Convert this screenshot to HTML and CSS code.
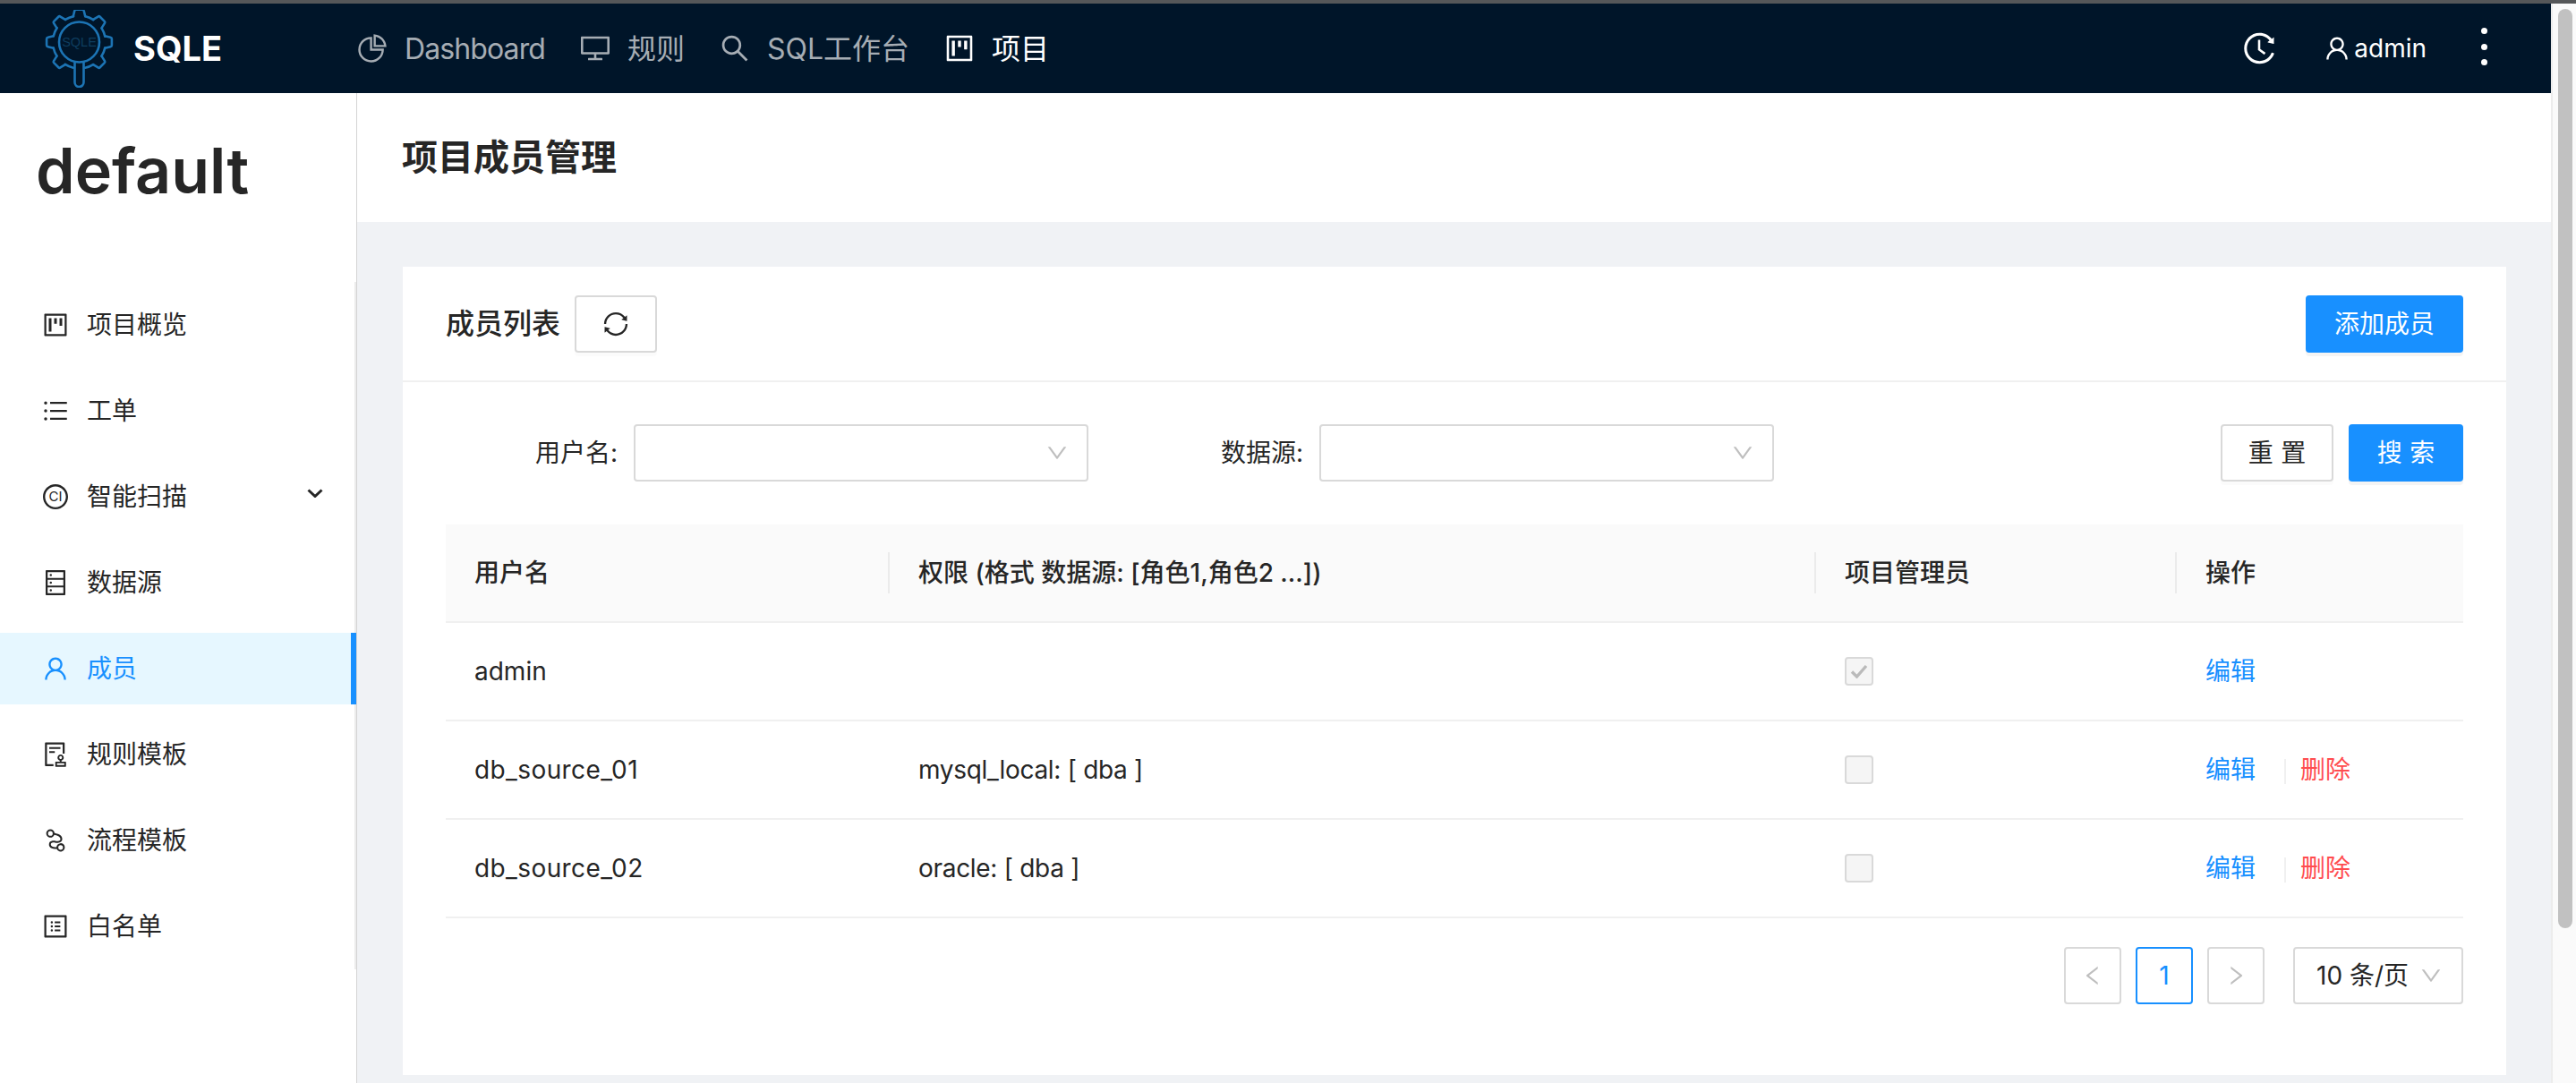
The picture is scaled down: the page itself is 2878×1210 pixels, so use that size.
FILE: index.html
```html
<!DOCTYPE html>
<html lang="zh-CN">
<head>
<meta charset="utf-8">
<title>SQLE</title>
<link rel="stylesheet" href="styles.css">
</head>
<body>
<svg class="sprite" xmlns="http://www.w3.org/2000/svg" aria-hidden="true">
  <symbol id="i-pie" viewBox="64 64 896 896"><path d="M864 518H506V160c0-4.4-3.6-8-8-8h-26a398.46 398.46 0 0 0-282.8 117.1 398.19 398.19 0 0 0-85.7 127.1A397.61 397.61 0 0 0 72 552a398.46 398.46 0 0 0 117.1 282.8c36.7 36.7 79.5 65.6 127.1 85.7A397.61 397.61 0 0 0 472 952a398.46 398.46 0 0 0 282.8-117.1c36.7-36.7 65.6-79.5 85.7-127.1A397.61 397.61 0 0 0 872 552v-26c0-4.4-3.6-8-8-8zM705.7 787.8A331.59 331.59 0 0 1 470.4 884c-88.1-.4-170.9-34.9-233.2-97.2C174.5 724.1 140 640.7 140 552c0-88.7 34.5-172.1 97.2-234.8 54.6-54.6 124.9-87.9 200.8-95.5V586h364.3c-7.7 76.3-41.3 147-96.6 201.8zM952 462.4l-2.6-28.2c-8.5-92.1-49.4-179-115.2-244.6A399.4 399.4 0 0 0 589 74.6L560.7 72c-4.7-.4-8.7 3.2-8.7 7.9V464c0 4.4 3.6 8 8 8l384-1c4.7 0 8.4-4 8-8.6zm-332.2-58.2V147.6a332.24 332.24 0 0 1 166.4 89.8c45.7 45.6 77 103.6 90 166.1l-256.4.7z"/></symbol>
  <symbol id="i-desktop" viewBox="64 64 896 896"><path d="M928 140H96c-17.7 0-32 14.3-32 32v496c0 17.7 14.3 32 32 32h380v112H304c-8.8 0-16 7.2-16 16v48c0 4.4 3.6 8 8 8h432c4.4 0 8-3.6 8-8v-48c0-8.8-7.2-16-16-16H548V700h380c17.7 0 32-14.3 32-32V172c0-17.7-14.3-32-32-32zm-40 488H136V212h752v416z"/></symbol>
  <symbol id="i-search" viewBox="64 64 896 896"><path d="M909.6 854.5L649.9 594.8C690.2 542.7 712 479 712 412c0-80.2-31.3-155.4-87.9-212.1-56.6-56.7-132-87.9-212.1-87.9s-155.5 31.3-212.1 87.9C143.2 256.5 112 331.8 112 412c0 80.1 31.3 155.5 87.9 212.1C256.5 680.8 331.8 712 412 712c67 0 130.6-21.8 182.7-62l259.7 259.6a8.2 8.2 0 0 0 11.6 0l43.6-43.5a8.2 8.2 0 0 0 0-11.6zM570.4 570.4C528 612.7 471.8 636 412 636s-116-23.3-158.4-65.6C211.3 528 188 471.8 188 412s23.3-116.1 65.6-158.4C296 211.3 352.2 188 412 188s116.1 23.2 158.4 65.6S636 352.2 636 412s-23.3 116.1-65.6 158.4z"/></symbol>
  <symbol id="i-project" viewBox="64 64 896 896"><path d="M280 752h80c4.4 0 8-3.6 8-8V280c0-4.4-3.6-8-8-8h-80c-4.4 0-8 3.6-8 8v464c0 4.4 3.6 8 8 8zm192-280h80c4.4 0 8-3.6 8-8V280c0-4.4-3.6-8-8-8h-80c-4.4 0-8 3.6-8 8v184c0 4.4 3.6 8 8 8zm192 72h80c4.4 0 8-3.6 8-8V280c0-4.4-3.6-8-8-8h-80c-4.4 0-8 3.6-8 8v256c0 4.4 3.6 8 8 8zm216-432H144c-17.7 0-32 14.3-32 32v736c0 17.7 14.3 32 32 32h736c17.7 0 32-14.3 32-32V144c0-17.7-14.3-32-32-32zm-40 728H184V184h656v656z"/></symbol>
  <symbol id="i-user" viewBox="64 64 896 896"><path d="M858.5 763.6a374 374 0 0 0-80.6-119.5 375.63 375.63 0 0 0-119.5-80.6c-.4-.2-.8-.3-1.2-.5C719.5 518 760 444.7 760 362c0-137-111-248-248-248S264 225 264 362c0 82.7 40.5 156 102.8 201.1-.4.2-.8.3-1.2.5-44.8 18.9-85 46-119.5 80.6a375.63 375.63 0 0 0-80.6 119.5A371.7 371.7 0 0 0 136 901.8a8 8 0 0 0 8 8.2h60c4.4 0 7.9-3.5 8-7.8 2-77.2 33-149.5 87.8-204.3 56.7-56.7 132-87.9 212.2-87.9s155.5 31.2 212.2 87.9C779 752.7 810 825 812 902.2c.1 4.4 3.6 7.8 8 7.8h60a8 8 0 0 0 8-8.2c-1-47.8-10.9-94.3-29.5-138.2zM512 534c-45.9 0-89.1-17.9-121.6-50.4S340 407.9 340 362c0-45.9 17.9-89.1 50.4-121.6S466.1 190 512 190s89.1 17.9 121.6 50.4S684 316.1 684 362c0 45.9-17.9 89.1-50.4 121.6S557.9 534 512 534z"/></symbol>
  <symbol id="i-history" viewBox="64 64 896 896"><path d="M536.1 273H488c-4.4 0-8 3.6-8 8v275.3c0 2.6 1.2 5 3.3 6.5l165.3 120.7c3.6 2.6 8.6 1.9 11.2-1.7l28.6-39c2.7-3.7 1.9-8.7-1.7-11.2L544.1 528.5V281c0-4.4-3.6-8-8-8zm219.8 75.2l156.8 38.3c5 1.2 9.9-2.6 9.9-7.7l.8-161.5c0-6.7-7.7-10.5-12.9-6.3L752.9 334.1a8 8 0 0 0 3 14.1zm167.7 301.1l-56.7-19.5a8 8 0 0 0-10.1 4.8c-1.9 5.1-3.9 10.1-6 15.1-17.8 42.1-43.3 80-75.9 112.5a353 353 0 0 1-112.5 75.9 352.18 352.18 0 0 1-137.7 27.8c-47.8 0-94.1-9.3-137.7-27.8a353 353 0 0 1-112.5-75.9c-32.5-32.5-58-70.4-75.9-112.5A353.44 353.44 0 0 1 171 512c0-47.8 9.3-94.2 27.8-137.8 17.8-42.1 43.3-80 75.9-112.5a353 353 0 0 1 112.5-75.9C430.6 167.3 477 158 524.8 158s94.1 9.3 137.7 27.8A353 353 0 0 1 775 261.7c10.2 10.3 19.8 21 28.6 32.3l59.8-46.8C784.7 146.6 662.2 81.9 524.6 82 285 82.1 92.6 276.7 95 516.4 97.4 751.9 288.9 942 524.8 942c185.5 0 343.5-117.6 403.7-282.3 1.5-4.2-.7-8.9-4.9-10.4z"/></symbol>
  <symbol id="i-sync" viewBox="64 64 896 896"><path d="M168 504.2c1-43.7 10-86.1 26.9-126 17.3-41 42.1-77.7 73.7-109.4S337 212.3 378 195c42.4-17.9 87.4-27 133.9-27s91.5 9.1 133.8 27A341.5 341.5 0 0 1 755 268.8c9.9 9.9 19.2 20.4 27.8 31.4l-60.2 47a8 8 0 0 0 3 14.1l175.7 43c5 1.2 9.9-2.6 9.9-7.7l.8-180.9c0-6.7-7.7-10.5-12.9-6.3l-56.4 44.1C765.8 155.1 646.2 92 511.8 92 282.7 92 96.3 275.6 92 503.8a8 8 0 0 0 8 8.2h60c4.4 0 7.9-3.5 8-7.8zm756 7.8h-60c-4.4 0-7.9 3.5-8 7.8-1 43.7-10 86.1-26.9 126-17.3 41-42.1 77.8-73.7 109.4A342.45 342.45 0 0 1 512.1 856a342.24 342.24 0 0 1-243.2-100.8c-9.9-9.9-19.2-20.4-27.8-31.4l60.2-47a8 8 0 0 0-3-14.1l-175.7-43c-5-1.2-9.9 2.6-9.9 7.7l-.7 181c0 6.7 7.7 10.5 12.9 6.3l56.4-44.1C258.2 868.9 377.8 932 512.2 932c229.2 0 415.5-183.7 419.8-411.8a8 8 0 0 0-8-8.2z"/></symbol>
  <symbol id="i-list" viewBox="64 64 896 896"><path d="M912 192H328c-4.4 0-8 3.6-8 8v56c0 4.4 3.6 8 8 8h584c4.4 0 8-3.6 8-8v-56c0-4.4-3.6-8-8-8zm0 284H328c-4.4 0-8 3.6-8 8v56c0 4.4 3.6 8 8 8h584c4.4 0 8-3.6 8-8v-56c0-4.4-3.6-8-8-8zm0 284H328c-4.4 0-8 3.6-8 8v56c0 4.4 3.6 8 8 8h584c4.4 0 8-3.6 8-8v-56c0-4.4-3.6-8-8-8zM104 228a56 56 0 1 0 112 0 56 56 0 1 0-112 0zm0 284a56 56 0 1 0 112 0 56 56 0 1 0-112 0zm0 284a56 56 0 1 0 112 0 56 56 0 1 0-112 0z"/></symbol>
  <symbol id="i-db" viewBox="64 64 896 896"><path d="M832 64H192c-17.7 0-32 14.3-32 32v832c0 17.7 14.3 32 32 32h640c17.7 0 32-14.3 32-32V96c0-17.7-14.3-32-32-32zm-600 72h560v208H232V136zm560 480H232V408h560v208zm0 272H232V680h560v208zM304 240a40 40 0 1 0 80 0 40 40 0 1 0-80 0zm0 272a40 40 0 1 0 80 0 40 40 0 1 0-80 0zm0 272a40 40 0 1 0 80 0 40 40 0 1 0-80 0z"/></symbol>
  <symbol id="i-audit" viewBox="64 64 896 896"><path d="M296 250c-4.4 0-8 3.6-8 8v48c0 4.4 3.6 8 8 8h384c4.4 0 8-3.6 8-8v-48c0-4.4-3.6-8-8-8H296zm184 144H296c-4.4 0-8 3.6-8 8v48c0 4.4 3.6 8 8 8h184c4.4 0 8-3.6 8-8v-48c0-4.4-3.6-8-8-8zm-48 458H208V148h560v320c0 4.4 3.6 8 8 8h56c4.4 0 8-3.6 8-8V108c0-17.7-14.3-32-32-32H168c-17.7 0-32 14.3-32 32v784c0 17.7 14.3 32 32 32h264c4.4 0 8-3.6 8-8v-56c0-4.4-3.6-8-8-8zm440-88H728v-36.6c46.3-13.8 80-56.6 80-107.4 0-61.9-50.1-112-112-112s-112 50.1-112 112c0 50.7 33.7 93.6 80 107.4V764H520c-8.8 0-16 7.2-16 16v152c0 8.8 7.2 16 16 16h352c8.8 0 16-7.2 16-16V780c0-8.8-7.2-16-16-16zM646 620c0-27.6 22.4-50 50-50s50 22.4 50 50-22.4 50-50 50-50-22.4-50-50zm180 266H566v-60h260v60z"/></symbol>
  <symbol id="i-node" viewBox="64 64 896 896"><path d="M843.5 737.4c-12.4-75.2-79.2-129.1-155.3-125.4S550.9 676 546 752c-153.5-4.8-208-40.7-199.1-113.7 3.3-27.3 19.8-41.9 50.1-49 18.4-4.3 38.8-4.9 57.3-3.2 1.7.2 3.5.3 5.2.5 11.3 2.7 22.8 5 34.3 6.8 34.1 5.6 68.8 8.4 101.8 6.6 92.8-5 156-45.9 159.2-132.7 3.1-84.1-54.7-143.7-147.9-183.6-29.9-12.8-61.6-22.7-93.3-30.2-14.3-3.4-26.3-5.7-35.2-7.2-7.9-75.9-71.5-133.8-147.8-134.4-76.3-.6-140.9 56.1-150.1 131.9s40 146.3 114.2 163.9c74.2 17.6 149.9-23.3 175.7-95.1 9.4 1.7 18.7 3.6 28 5.8 28.2 6.6 56.4 15.4 82.4 26.6 70.7 30.2 109.3 70.1 107.5 119.9-1.6 44.6-33.6 65.2-96.2 68.6-27.5 1.5-57.6-.9-87.3-5.8-8.3-1.4-15.9-2.8-22.6-4.3-3.9-.8-6.6-1.5-7.8-1.8l-3.1-.6c-2.2-.3-5.9-.8-10.7-1.3-25-2.3-52.1-1.5-78.5 4.6-55.2 12.9-93.9 47.2-101.1 105.8-15.7 126.2 78.6 184.7 276 188.9 29.1 70.4 106.4 107.9 179.6 87 73.3-20.9 119.3-93.4 106.9-168.6zM329.1 345.2a83.3 83.3 0 1 1 .01-166.61 83.3 83.3 0 0 1-.01 166.61zM695.6 845a83.3 83.3 0 1 1 .01-166.61A83.3 83.3 0 0 1 695.6 845z"/></symbol>
  <symbol id="i-profile" viewBox="64 64 896 896"><path d="M880 112H144c-17.7 0-32 14.3-32 32v736c0 17.7 14.3 32 32 32h736c17.7 0 32-14.3 32-32V144c0-17.7-14.3-32-32-32zm-40 728H184V184h656v656zM492 400h184c4.4 0 8-3.6 8-8v-48c0-4.4-3.6-8-8-8H492c-4.4 0-8 3.6-8 8v48c0 4.4 3.6 8 8 8zm0 144h184c4.4 0 8-3.6 8-8v-48c0-4.4-3.6-8-8-8H492c-4.4 0-8 3.6-8 8v48c0 4.4 3.6 8 8 8zm0 144h184c4.4 0 8-3.6 8-8v-48c0-4.4-3.6-8-8-8H492c-4.4 0-8 3.6-8 8v48c0 4.4 3.6 8 8 8zM340 368a40 40 0 1 0 80 0 40 40 0 1 0-80 0zm0 144a40 40 0 1 0 80 0 40 40 0 1 0-80 0zm0 144a40 40 0 1 0 80 0 40 40 0 1 0-80 0z"/></symbol>
  <symbol id="i-down" viewBox="64 64 896 896"><path d="M884 256h-75c-5.1 0-9.9 2.5-12.9 6.6L512 654.2 227.9 262.6c-3-4.1-7.8-6.6-12.9-6.6h-75c-6.5 0-10.3 7.4-6.5 12.7l352.6 486.1c12.8 17.6 39 17.6 51.7 0l352.6-486.1c3.9-5.3.1-12.7-6.4-12.7z"/></symbol>
  <symbol id="i-left" viewBox="64 64 896 896"><path d="M724 218.3V141c0-6.7-7.7-10.4-12.9-6.3L260.3 486.8a31.86 31.86 0 0 0 0 50.3l450.8 352.1c5.3 4.1 12.9.4 12.9-6.3v-77.3c0-4.9-2.3-9.6-6.1-12.6l-360-281 360-281.1c3.8-3 6.1-7.7 6.1-12.6z"/></symbol>
  <symbol id="i-right" viewBox="64 64 896 896"><path d="M765.7 486.8L314.9 134.7A7.97 7.97 0 0 0 302 141v77.3c0 4.9 2.3 9.6 6.1 12.6l360 281.1-360 281.1c-3.9 3-6.1 7.7-6.1 12.6V883c0 6.7 7.7 10.4 12.9 6.3l450.8-352.1a31.96 31.96 0 0 0 0-50.4z"/></symbol>
</svg>

<div class="window-edge"></div>
<div class="window">
  <div class="page">
    <header class="topbar">
      <a class="brand">
        <svg class="logo" viewBox="0 0 77 87" fill="none" stroke="#1c74b4" stroke-width="2.6" stroke-linejoin="round" stroke-linecap="round">
          <g transform="translate(38.5 36)">
            <circle r="29.5" stroke-dasharray="9.8 13.37" stroke-dashoffset="-6.68"/>
            <path d="M-6.7 -28.7 L-5.2 -35 Q-5 -36.4 -3.6 -36.4 H3.6 Q5 -36.4 5.2 -35 L6.7 -28.7"/>
            <path d="M-6.7 -28.7 L-5.2 -35 Q-5 -36.4 -3.6 -36.4 H3.6 Q5 -36.4 5.2 -35 L6.7 -28.7" transform="rotate(45)"/>
            <path d="M-6.7 -28.7 L-5.2 -35 Q-5 -36.4 -3.6 -36.4 H3.6 Q5 -36.4 5.2 -35 L6.7 -28.7" transform="rotate(90)"/>
            <path d="M-6.7 -28.7 L-5.2 -35 Q-5 -36.4 -3.6 -36.4 H3.6 Q5 -36.4 5.2 -35 L6.7 -28.7" transform="rotate(135)"/>
            <path d="M-6.7 -28.7 L-5.2 -35 Q-5 -36.4 -3.6 -36.4 H3.6 Q5 -36.4 5.2 -35 L6.7 -28.7" transform="rotate(225)"/>
            <path d="M-6.7 -28.7 L-5.2 -35 Q-5 -36.4 -3.6 -36.4 H3.6 Q5 -36.4 5.2 -35 L6.7 -28.7" transform="rotate(270)"/>
            <path d="M-6.7 -28.7 L-5.2 -35 Q-5 -36.4 -3.6 -36.4 H3.6 Q5 -36.4 5.2 -35 L6.7 -28.7" transform="rotate(315)"/>
            <circle r="22.5"/>
            <path d="M-5 23 V45 A5 5 0 0 0 5 45 V23"/>
          </g>
          <text class="logo-text" x="38.5" y="41" text-anchor="middle">SQLE</text>
        </svg>
        <span class="brand-name">SQLE</span>
      </a>
      <nav class="topnav">
        <a class="topnav-item"><svg class="icon icon-32"><use href="#i-pie"/></svg><span class="tight">Dashboard</span></a>
        <a class="topnav-item"><svg class="icon icon-32"><use href="#i-desktop"/></svg><span>规则</span></a>
        <a class="topnav-item"><svg class="icon icon-32"><use href="#i-search"/></svg><span>SQL工作台</span></a>
        <a class="topnav-item is-active"><svg class="icon icon-32"><use href="#i-project"/></svg><span>项目</span></a>
      </nav>
      <div class="topbar-right">
        <svg class="icon icon-36"><use href="#i-history"/></svg>
        <span class="account"><svg class="icon icon-28"><use href="#i-user"/></svg><span>admin</span></span>
        <span class="more"><i></i><i></i><i></i></span>
      </div>
    </header>

    <div class="layout">
      <aside class="sider">
        <div class="project-name">default</div>
        <ul class="menu">
          <li class="menu-item"><svg class="icon icon-28"><use href="#i-project"/></svg><span>项目概览</span></li>
          <li class="menu-item"><svg class="icon icon-28"><use href="#i-list"/></svg><span>工单</span></li>
          <li class="menu-item">
            <svg class="icon icon-28" viewBox="64 64 896 896"><path d="M512 64C264.6 64 64 264.6 64 512s200.6 448 448 448 448-200.6 448-448S759.4 64 512 64zm0 820c-205.4 0-372-166.6-372-372s166.6-372 372-372 372 166.6 372 372-166.6 372-372 372z"/><text class="ci-text" x="512" y="682">CI</text></svg>
            <span>智能扫描</span>
            <svg class="submenu-arrow" viewBox="0 0 18 10" fill="none"><path d="M1.5 1.5 L9 8.5 L16.5 1.5"/></svg>
          </li>
          <li class="menu-item"><svg class="icon icon-28"><use href="#i-db"/></svg><span>数据源</span></li>
          <li class="menu-item is-selected"><svg class="icon icon-28"><use href="#i-user"/></svg><span>成员</span></li>
          <li class="menu-item"><svg class="icon icon-28"><use href="#i-audit"/></svg><span>规则模板</span></li>
          <li class="menu-item"><svg class="icon icon-28"><use href="#i-node"/></svg><span>流程模板</span></li>
          <li class="menu-item"><svg class="icon icon-28"><use href="#i-profile"/></svg><span>白名单</span></li>
        </ul>
      </aside>

      <main class="main">
        <div class="page-title"><h1>项目成员管理</h1></div>
        <section class="card">
          <div class="card-head">
            <h2>成员列表</h2>
            <button class="btn btn-refresh"><svg class="icon icon-28"><use href="#i-sync"/></svg></button>
            <button class="btn btn-primary btn-add">添加成员</button>
          </div>
          <div class="card-body">
            <form class="filters">
              <div class="field"><label>用户名:</label><div class="select select-filter"><svg class="icon icon-24 arrow"><use href="#i-down"/></svg></div></div>
              <div class="field"><label>数据源:</label><div class="select select-filter"><svg class="icon icon-24 arrow"><use href="#i-down"/></svg></div></div>
              <div class="filter-actions">
                <button type="button" class="btn btn-reset"><span class="spaced">重置</span></button>
                <button type="button" class="btn btn-primary btn-search"><span class="spaced">搜索</span></button>
              </div>
            </form>
            <table class="table">
              <colgroup><col class="col-a"><col class="col-b"><col class="col-c"><col class="col-d"></colgroup>
              <thead>
                <tr><th>用户名</th><th>权限 (格式 数据源: [角色1,角色2 ...])</th><th>项目管理员</th><th>操作</th></tr>
              </thead>
              <tbody>
                <tr>
                  <td>admin</td><td></td>
                  <td><span class="checkbox"><svg class="check-mark" viewBox="0 0 20 16" fill="none"><path d="M2 8.5 L7.5 14 L18 2"/></svg></span></td>
                  <td><a class="link">编辑</a></td>
                </tr>
                <tr>
                  <td class="cell-name">db_source_01</td><td class="cell-perm">mysql_local: [ dba ]</td>
                  <td><span class="checkbox"></span></td>
                  <td><a class="link">编辑</a><i class="divider"></i><a class="link link-danger">删除</a></td>
                </tr>
                <tr>
                  <td class="cell-name">db_source_02</td><td class="cell-perm">oracle: [ dba ]</td>
                  <td><span class="checkbox"></span></td>
                  <td><a class="link">编辑</a><i class="divider"></i><a class="link link-danger">删除</a></td>
                </tr>
              </tbody>
            </table>
            <div class="pagination">
              <span class="page-btn"><svg class="icon icon-24"><use href="#i-left"/></svg></span>
              <span class="page-btn is-current">1</span>
              <span class="page-btn"><svg class="icon icon-24"><use href="#i-right"/></svg></span>
              <div class="select select-size"><span>10 条/页</span><svg class="icon icon-24 arrow"><use href="#i-down"/></svg></div>
            </div>
          </div>
        </section>
      </main>
    </div>
  </div>
  <div class="scrollbar"><div class="scrollbar-thumb"></div></div>
</div>
</body>
</html>
```

FILE: styles.css
```css
* { box-sizing: border-box; }
html, body { margin: 0; height: 100%; }
body {
  display: flex;
  flex-direction: column;
  height: 1210px;
  overflow: hidden;
  background: #f0f2f5;
  color: #262626;
  font-family: Inter, "Noto Sans CJK SC", sans-serif;
  font-size: 28px;
  line-height: 44px;
}
.sprite { display: none; }
h1, h2, ul { margin: 0; padding: 0; }
ul { list-style: none; }
.icon { display: block; flex: none; fill: currentColor; }
.icon-24 { width: 24px; height: 24px; }
.icon-28 { width: 28px; height: 28px; }
.icon-32 { width: 32px; height: 32px; }
.icon-36 { width: 36px; height: 36px; }

.window-edge { flex: none; height: 4px; background: #555759; }
.window { flex: 1; display: flex; min-height: 0; }
.page { flex: 1; min-width: 0; display: flex; flex-direction: column; }

/* top bar */
.topbar {
  flex: none;
  display: flex;
  align-items: center;
  height: 100px;
  padding-right: 71px;
  background: #001529;
  color: #fff;
}
.brand { flex: none; width: 400px; display: flex; align-items: center; gap: 22px; padding-left: 50px; }
.logo { flex: none; width: 77px; height: 87px; margin-top: 1px; }
.logo-text { fill: #0e3d5e; stroke: none; font-family: "Liberation Sans", sans-serif; font-size: 14.5px; }
.brand-name { font-size: 38px; font-weight: 700; line-height: 48px; }
.topnav { display: flex; gap: 40px; }
.topnav-item {
  display: flex;
  align-items: center;
  gap: 20px;
  color: #a6adb4;
  font-size: 32px;
  line-height: 48px;
}
.topnav-item span { margin-top: 2px; }
.topnav-item .tight { letter-spacing: -.9px; }
.topnav-item.is-active { color: #fff; }
.topbar-right { margin-left: auto; display: flex; align-items: center; }
.account { display: flex; align-items: center; gap: 5px; margin-left: 55px; }
.more { display: flex; flex-direction: column; gap: 10.5px; margin-left: 61px; margin-bottom: 4px; }
.more i { display: block; width: 7px; height: 7px; border-radius: 50%; background: #fff; }

.layout { flex: 1; display: flex; min-height: 0; }

/* side bar */
.sider {
  flex: none;
  width: 399px;
  background: #fff;
  border-right: 1px solid #d4d4d4;
}
.project-name {
  height: 211px;
  padding: 44px 0 0 40px;
  font-size: 70px;
  font-weight: 600;
  line-height: 86px;
}
.menu {
  display: flex;
  flex-direction: column;
  gap: 16px;
  padding: 8px 0;
  border-right: 2px solid #ececec;
}
.menu-item {
  display: flex;
  align-items: center;
  gap: 21px;
  height: 80px;
  padding-left: 48px;
}
.menu-item.is-selected {
  margin-right: -2px;
  color: #1890ff;
  background: #e6f7ff;
  border-right: 6px solid #1890ff;
}
.ci-text { font-family: Inter, sans-serif; font-size: 480px; text-anchor: middle; }
.submenu-arrow { width: 18px; height: 10px; margin-left: auto; margin-right: 35px; margin-top: -8px; stroke: #262626; stroke-width: 3; }

/* main */
.main { flex: 1; min-width: 0; }
.page-title {
  display: flex;
  align-items: center;
  height: 144px;
  padding-left: 50px;
  background: #fff;
}
.page-title h1 { font-size: 40px; font-weight: 600; line-height: 56px; }
.card { margin: 50px 50px 0 51px; background: #fff; height: 903px; }
.card-head {
  display: flex;
  align-items: flex-start;
  height: 129px;
  padding: 32px 48px 0;
  border-bottom: 2px solid #f0f0f0;
}
.card-head h2 { font-size: 32px; font-weight: 500; line-height: 64px; }
.card-body { padding: 47px 48px 0; }

/* buttons */
.btn {
  display: flex;
  align-items: center;
  justify-content: center;
  height: 64px;
  padding: 0;
  background: #fff;
  border: 2px solid #d9d9d9;
  border-radius: 4px;
  box-shadow: 0 4px 0 rgba(0, 0, 0, .015);
  color: #262626;
  font: inherit;
}
.btn-primary {
  background: #1890ff;
  border-color: #1890ff;
  box-shadow: 0 4px 0 rgba(0, 0, 0, .045);
  color: #fff;
}
.btn-refresh { width: 92px; margin-left: 16px; }
.btn-add { width: 176px; margin-left: auto; }
.btn-reset { width: 126px; }
.btn-search { width: 128px; }
.spaced { letter-spacing: .3em; margin-right: -.3em; }

/* filter form */
.filters { display: flex; height: 64px; margin-bottom: 48px; gap: 48px; }
.field { display: grid; grid-template-columns: 210px 508px; align-items: center; }
.field label { justify-self: end; padding-right: 18px; }
.select {
  display: flex;
  align-items: center;
  justify-content: space-between;
  height: 64px;
  background: #fff;
  border: 2px solid #d9d9d9;
  border-radius: 4px;
}
.select .arrow { color: #bfbfbf; }
.select-filter { justify-content: flex-end; padding-right: 21px; }
.select-size { width: 190px; margin-left: 16px; padding: 0 22px 0 24px; }
.filter-actions { margin-left: auto; display: flex; gap: 17px; }

/* table */
.table { width: 100%; table-layout: fixed; border-collapse: separate; border-spacing: 0; }
.col-a { width: 496px; }
.col-b { width: 1035px; }
.col-c { width: 403px; }
.col-d { width: 320px; }
.table th, .table td {
  height: 110px;
  padding: 0 32px;
  border-bottom: 2px solid #f0f0f0;
  text-align: left;
}
.table th { position: relative; background: #fafafa; font-weight: 500; }
.table th + th::before {
  content: "";
  position: absolute;
  left: -2px;
  top: 31px;
  width: 2px;
  height: 46px;
  background: rgba(0, 0, 0, .06);
}
.table tbody td:last-child { white-space: nowrap; }
.cell-name { letter-spacing: .4px; }
.cell-perm { letter-spacing: -.3px; }
.checkbox {
  display: flex;
  align-items: center;
  justify-content: center;
  width: 32px;
  height: 32px;
  background: #f5f5f5;
  border: 2px solid #d9d9d9;
  border-radius: 4px;
}
.check-mark { display: block; width: 20px; height: 16px; stroke: #bababa; stroke-width: 3.4; }
.link { color: #1890ff; }
.link-danger { color: #ff4d4f; }
.divider {
  display: inline-block;
  width: 2px;
  height: 28px;
  margin: 0 16px 0 32px;
  vertical-align: middle;
  background: #f0f0f0;
}

/* pagination */
.pagination { display: flex; justify-content: flex-end; gap: 16px; margin-top: 32px; }
.page-btn {
  display: flex;
  align-items: center;
  justify-content: center;
  width: 64px;
  height: 64px;
  border: 2px solid #d9d9d9;
  border-radius: 4px;
  color: #bfbfbf;
}
.page-btn.is-current { border-color: #1890ff; color: #1890ff; }

/* page scrollbar, drawn as part of the window */
.scrollbar {
  flex: none;
  width: 28px;
  padding: 6px 4px 0 8px;
  background: #fafafa;
  border-left: 2px solid #ececec;
}
.scrollbar-thumb { width: 16px; height: 1027px; margin-left: -2px; border-radius: 8px; background: #c1c1c1; }
```
